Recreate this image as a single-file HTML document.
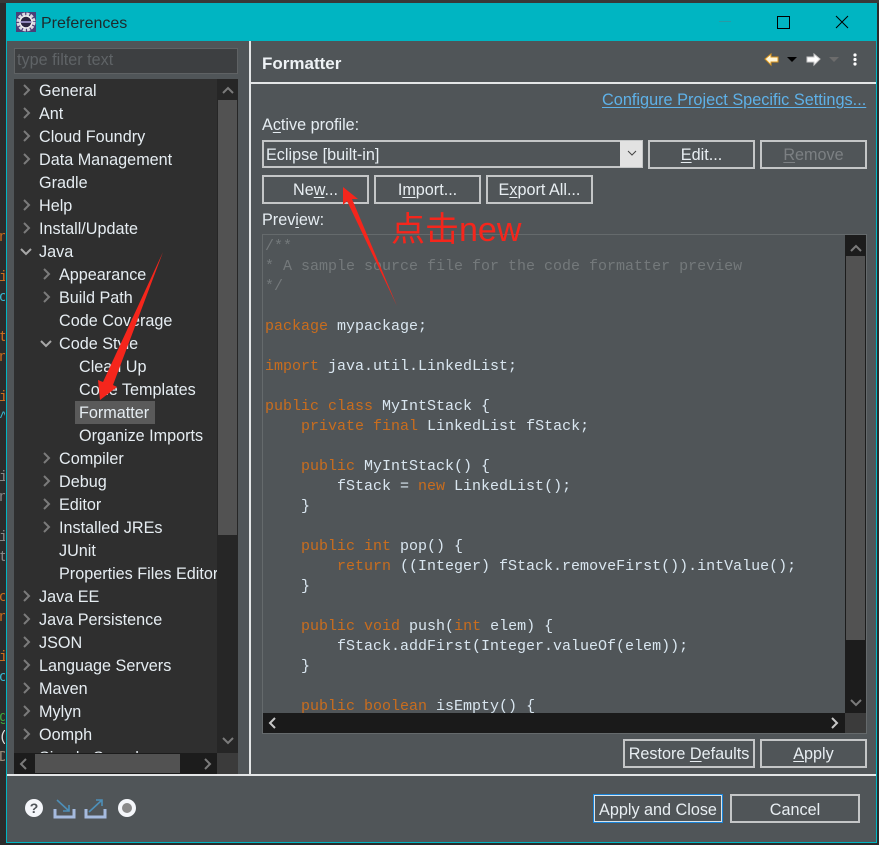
<!DOCTYPE html>
<html><head><meta charset="utf-8"><style>
html,body{margin:0;padding:0;width:879px;height:845px;overflow:hidden;background:#2b2b2b}
*{box-sizing:border-box}
body{font-family:"Liberation Sans","Noto Sans CJK SC",sans-serif;font-size:16.2px;color:#e6edf2;position:relative}
.a{position:absolute}
.t{position:absolute;white-space:nowrap;line-height:23px;height:23px;margin-top:1px}
.b{position:absolute;border:2px solid #c4c6c7;text-align:center;line-height:26px;height:29px;white-space:nowrap;font-size:16.2px;color:#e8eef2}
u{text-underline-offset:2px}
pre{margin:0;font-family:"Liberation Mono",monospace;font-size:15px;line-height:20px;color:#d9e6f0}
.c{color:#74797b}.k{color:#c96d1e}
</style></head><body>
<div class="a" style="left:0;top:0;width:879px;height:3px;background:#383838"></div>
<pre class="a" style="left:-1px;top:228px;font-size:15px;line-height:20px;color:#c96d1e;width:6px;overflow:hidden">n

i
<span style="color:#39b7d0">o</span>

t
n

i
<span style="color:#39b7d0">^</span>


<span style="color:#888">i</span>
<span style="color:#888">n</span>

<span style="color:#888">i</span>
<span style="color:#888">t</span>

o
n

i
<span style="color:#39b7d0">o</span>

<span style="color:#3fa33f">g</span>
<span style="color:#ddd">(</span>
<span style="color:#9a8a7a">D</span></pre>

<!-- window -->
<div class="a" style="left:6px;top:3px;width:871px;height:840px;background:#505558;border:1px solid #00b5c2"></div>
<div class="a" style="left:6px;top:3px;width:871px;height:38px;background:#00b5c2"></div>
<svg class="a" style="left:16px;top:12px" width="20" height="20" viewBox="0 0 20 20"><rect width="20" height="20" fill="#4a3f78"/><circle cx="10" cy="10" r="8" fill="none" stroke="#d8d8e0" stroke-width="3" stroke-dasharray="3 1.2"/><circle cx="10" cy="10" r="6" fill="#2a2440" stroke="#eee" stroke-width="1.5"/><path d="M4.5 10h11" stroke="#8f86b8" stroke-width="2"/></svg>
<div class="t" style="left:41px;top:11px;color:#1d2a2c;font-size:16px">Preferences</div>
<div class="a" style="left:719px;top:21px;width:12px;height:1px;background:#2a9aa5"></div>
<div class="a" style="left:777px;top:16px;width:13px;height:13px;border:1px solid #000"></div>
<svg class="a" style="left:835px;top:15px" width="14" height="14"><path d="M1 1L13 13M13 1L1 13" stroke="#000" stroke-width="1"/></svg>

<!-- filter -->
<div class="a" style="left:14px;top:48px;width:224px;height:26px;background:#3d3f41;border:1px solid #5f6264"></div>
<div class="t" style="left:17px;top:48px;color:#5f6366">type filter text</div>

<!-- tree -->
<div class="a" style="left:14px;top:79px;width:203px;height:674px;background:#2f2f2f;overflow:hidden" id="tree">
<svg class="a" style="left:0;top:0" width="203" height="674" fill="none" stroke="#7b7b7b" stroke-width="2">
<path d="M10 6l5 5-5 5M10 29l5 5-5 5M10 52l5 5-5 5M10 75l5 5-5 5M10 121l5 5-5 5M10 144l5 5-5 5"/>
<path d="M7 170l5 5 5-5" stroke="#a8a8a8"/>
<path d="M30 190l5 5-5 5M30 213l5 5-5 5"/>
<path d="M27 262l5 5 5-5" stroke="#a8a8a8"/>
<path d="M30 374l5 5-5 5M30 397l5 5-5 5M30 420l5 5-5 5M30 443l5 5-5 5"/>
<path d="M10 512l5 5-5 5M10 535l5 5-5 5M10 558l5 5-5 5M10 581l5 5-5 5M10 604l5 5-5 5M10 627l5 5-5 5M10 650l5 5-5 5"/>
</svg>
<div class="a" style="left:61px;top:322px;width:80px;height:23px;background:#5a5a5a"></div>
<div class="t" style="left:25px;top:0">General</div>
<div class="t" style="left:25px;top:23px">Ant</div>
<div class="t" style="left:25px;top:46px">Cloud Foundry</div>
<div class="t" style="left:25px;top:69px">Data Management</div>
<div class="t" style="left:25px;top:92px">Gradle</div>
<div class="t" style="left:25px;top:115px">Help</div>
<div class="t" style="left:25px;top:138px">Install/Update</div>
<div class="t" style="left:25px;top:161px">Java</div>
<div class="t" style="left:45px;top:184px">Appearance</div>
<div class="t" style="left:45px;top:207px">Build Path</div>
<div class="t" style="left:45px;top:230px">Code Coverage</div>
<div class="t" style="left:45px;top:253px">Code Style</div>
<div class="t" style="left:65px;top:276px">Clean Up</div>
<div class="t" style="left:65px;top:299px">Code Templates</div>
<div class="t" style="left:65px;top:322px">Formatter</div>
<div class="t" style="left:65px;top:345px">Organize Imports</div>
<div class="t" style="left:45px;top:368px">Compiler</div>
<div class="t" style="left:45px;top:391px">Debug</div>
<div class="t" style="left:45px;top:414px">Editor</div>
<div class="t" style="left:45px;top:437px">Installed JREs</div>
<div class="t" style="left:45px;top:460px">JUnit</div>
<div class="t" style="left:45px;top:483px">Properties Files Editor</div>
<div class="t" style="left:25px;top:506px">Java EE</div>
<div class="t" style="left:25px;top:529px">Java Persistence</div>
<div class="t" style="left:25px;top:552px">JSON</div>
<div class="t" style="left:25px;top:575px">Language Servers</div>
<div class="t" style="left:25px;top:598px">Maven</div>
<div class="t" style="left:25px;top:621px">Mylyn</div>
<div class="t" style="left:25px;top:644px">Oomph</div>
<div class="t" style="left:25px;top:667px">Simple Search</div>
</div>
<!-- tree v scrollbar -->
<div class="a" style="left:217px;top:79px;width:21px;height:674px;background:#262626"></div>
<div class="a" style="left:218px;top:100px;width:19px;height:435px;background:#525252"></div>
<svg class="a" style="left:217px;top:79px" width="21" height="674" fill="none" stroke="#7b7b7b" stroke-width="2"><path d="M6 14l5-5 5 5M6 659l5 5 5-5"/></svg>
<!-- tree h scrollbar -->
<div class="a" style="left:14px;top:753px;width:203px;height:21px;background:#1c1c1c"></div>
<div class="a" style="left:35px;top:754px;width:145px;height:19px;background:#525252"></div>
<div class="a" style="left:217px;top:753px;width:21px;height:21px;background:#3b3b3b"></div>
<svg class="a" style="left:14px;top:753px" width="203" height="21" fill="none" stroke="#7b7b7b" stroke-width="2"><path d="M12 6l-5 5 5 5M191 6l5 5-5 5"/></svg>

<!-- separators -->
<div class="a" style="left:249px;top:41px;width:2px;height:733px;background:#e4e6e7"></div>
<div class="a" style="left:251px;top:82px;width:625px;height:2px;background:#e4e6e7"></div>
<div class="a" style="left:7px;top:774px;width:869px;height:2px;background:#e4e6e7"></div>

<!-- header -->
<div class="t" style="left:262px;top:51px;font-weight:bold;font-size:17px;color:#eef2f5">Formatter</div>
<svg class="a" style="left:760px;top:50px" width="105" height="20">
<path d="M5 9l6-5v3h7v5h-7v3z" fill="#fff6d8" stroke="#d8941c"/>
<path d="M27 7h10l-5 5z" fill="#000"/>
<path d="M60 9l-6-5v3h-7v5h7v3z" fill="#fff" stroke="#c8c8c8"/>
<path d="M69 7h10l-5 5z" fill="#6c6c6c"/>
<circle cx="95" cy="5" r="1.6" fill="#fff"/><circle cx="95" cy="9.5" r="1.6" fill="#fff"/><circle cx="95" cy="14" r="1.6" fill="#fff"/>
</svg>
<div class="t" style="left:602px;top:88px;color:#5eb1e8;text-decoration:underline;text-underline-offset:2px;font-size:16.3px">Configure Project Specific Settings...</div>
<div class="t" style="left:262px;top:113px">A<u>c</u>tive profile:</div>

<!-- combo -->
<div class="a" style="left:262px;top:140px;width:381px;height:28px;background:#505558;border:2px solid #c4c6c7"></div>
<div class="a" style="left:620px;top:141px;width:22px;height:26px;background:#e2e2e2"></div>
<svg class="a" style="left:627px;top:150px" width="10" height="8"><path d="M1 1l4 4 4-4" fill="none" stroke="#444"/></svg>
<div class="t" style="left:266px;top:143px">Eclipse [built-in]</div>

<div class="b" style="left:648px;top:140px;width:107px"><u>E</u>dit...</div>
<div class="b" style="left:760px;top:140px;width:107px;color:#7c8083"><u>R</u>emove</div>
<div class="b" style="left:262px;top:175px;width:107px">Ne<u>w</u>...</div>
<div class="b" style="left:374px;top:175px;width:107px">I<u>m</u>port...</div>
<div class="b" style="left:486px;top:175px;width:107px">E<u>x</u>port All...</div>
<div class="t" style="left:262px;top:208px">Prev<u>i</u>ew:</div>

<!-- preview -->
<div class="a" style="left:262px;top:234px;width:605px;height:500px;border:1px solid #656a6c;overflow:hidden">
<pre class="a" style="left:2px;top:2px;height:476px;overflow:hidden"><span class="c">/**
* A sample source file for the code formatter preview
*/</span>

<span class="k">package</span> mypackage;

<span class="k">import</span> java.util.LinkedList;

<span class="k">public class</span> MyIntStack {
    <span class="k">private final</span> LinkedList fStack;

    <span class="k">public</span> MyIntStack() {
        fStack = <span class="k">new</span> LinkedList();
    }

    <span class="k">public int</span> pop() {
        <span class="k">return</span> ((Integer) fStack.removeFirst()).intValue();
    }

    <span class="k">public void</span> push(<span class="k">int</span> elem) {
        fStack.addFirst(Integer.valueOf(elem));
    }

    <span class="k">public boolean</span> isEmpty() {</pre>
</div>
<div class="a" style="left:845px;top:235px;width:21px;height:478px;background:#1c1c1c"></div>
<div class="a" style="left:846px;top:256px;width:19px;height:384px;background:#525252"></div>
<div class="a" style="left:263px;top:713px;width:582px;height:20px;background:#1a1a1a"></div>
<div class="a" style="left:845px;top:713px;width:21px;height:20px;background:#3b3b3b"></div>
<svg class="a" style="left:263px;top:235px" width="603" height="498" fill="none" stroke-width="2">
<path d="M588 16l5-5 5 5M588 465l5 5 5-5" stroke="#7b7b7b"/>
<path d="M12 483l-5 5 5 5M569 483l5 5-5 5" stroke="#c8c8c8"/>
</svg>

<div class="b" style="left:623px;top:739px;width:132px;line-height:27px">Restore <u>D</u>efaults</div>
<div class="b" style="left:760px;top:739px;width:107px;line-height:27px"><u>A</u>pply</div>

<!-- bottom -->
<svg class="a" style="left:22px;top:796px" width="118" height="24">
<circle cx="12" cy="12" r="9" fill="#f4f6fa"/>
<text x="12" y="17" text-anchor="middle" font-family="Liberation Sans" font-weight="bold" font-size="14" fill="#50555a">?</text>
<path d="M33 13v8h19v-8" fill="none" stroke="#a6bbdf" stroke-width="3"/><path d="M35 4l12 11M47 9v6h-6" fill="none" stroke="#4d8fb8" stroke-width="1.6"/>
<path d="M64 13v8h19v-8" fill="none" stroke="#a6bbdf" stroke-width="3"/><path d="M67 16l13-12M74 4h6v6" fill="none" stroke="#4d8fb8" stroke-width="1.6"/>
<circle cx="105" cy="12" r="9" fill="#f4f6fa"/><circle cx="105" cy="12" r="5" fill="#8a8a8a"/>
</svg>
<div class="b" style="left:593px;top:794px;width:130px;border-color:#1a84d8;outline:1px solid #d8e4ec;outline-offset:-2px;border-width:1px;line-height:30px">Apply and Close</div>
<div class="b" style="left:730px;top:794px;width:130px;line-height:28px">Cancel</div>

<!-- annotations -->
<svg class="a" style="left:0;top:0" width="879" height="845">
<polygon points="343,187 358,199 352,199 397,306 347,201 343,205" fill="#f5261c"/>
<polygon points="163,252 113,385 117,387 100,400 98,380 103,382" fill="#f5261c"/>
</svg>
<div class="a" style="left:391px;top:209px;font-size:34px;line-height:42px;color:#f5261c;white-space:nowrap;font-family:'Liberation Sans','Noto Sans CJK SC',sans-serif">点击new</div>
</body></html>
